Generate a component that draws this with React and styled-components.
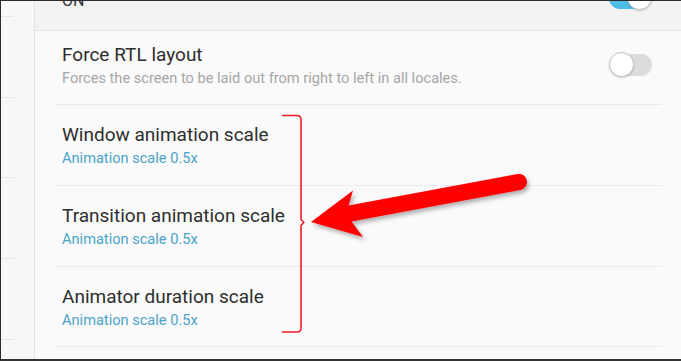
import React from "react";
import styled, { createGlobalStyle } from "styled-components";

const Global = createGlobalStyle`
  html, body { margin: 0; padding: 0; background: #fafafa; }
  body { font-family: Roboto, "Noto Sans", "Liberation Sans", sans-serif; }
`;

const Frame = styled.div`
  position: relative;
  width: 681px;
  height: 361px;
  box-sizing: border-box;
  border-top: 1px solid #2b2b2b;
  border-left: 1px solid #2b2b2b;
  border-bottom: 2px solid #333;
  display: flex;
  overflow: hidden;
  background: #fafafa;
`;

const Sidebar = styled.div`
  width: 33px;
  flex: none;
  border-right: 1px solid #e2e2e2;
  background: #f7f7f7;
  display: flex;
  flex-direction: column;
`;

const SideItem = styled.div`
  width: 13px;
  height: ${(p) => p.$h}px;
  flex: none;
  border-bottom: 1px solid #e6e6e6;
`;

const Main = styled.div`
  flex: 1;
  display: flex;
  flex-direction: column;
  min-width: 0;
`;

const TopRow = styled.div`
  height: 29px;
  flex: none;
  background: #f3f3f3;
  border-bottom: 1px solid #e4e4e4;
  display: flex;
  justify-content: space-between;
  align-items: flex-start;
  padding: 0 29px 0 27px;
  overflow: hidden;
`;

const OnText = styled.div`
  margin-top: -10px;
  font-size: 16px;
  line-height: 20px;
  color: #333;
`;

const Row = styled.div`
  height: ${(p) => p.$h}px;
  flex: none;
  box-sizing: border-box;
  padding: ${(p) => p.$pt}px 29px 0 27px;
  display: flex;
  justify-content: space-between;
  align-items: flex-start;
`;

const TextBlock = styled.div`
  display: flex;
  flex-direction: column;
`;

const Title = styled.div`
  font-size: 19px;
  line-height: 22px;
  color: #2e2e2e;
`;

const Sub = styled.div`
  margin-top: 2px;
  font-size: 14.6px;
  line-height: 20px;
  color: ${(p) => (p.$accent ? "#4aa3ca" : "#a6a6a6")};
`;

const Divider = styled.div`
  height: 1px;
  flex: none;
  margin: 0 19px 0 20px;
  background: #ebebeb;
`;

const Switch = styled.div`
  position: relative;
  width: 43px;
  height: 25px;
  flex: none;
  margin-top: ${(p) => p.$mt}px;
  display: flex;
  align-items: center;
`;

const Track = styled.div`
  width: 39px;
  height: 22px;
  border-radius: 11px;
  margin-left: ${(p) => (p.$on ? 0 : 4)}px;
  background: ${(p) => (p.$on ? "#4cbde6" : "#dcdcdc")};
`;

const Thumb = styled.div`
  position: absolute;
  top: 0;
  left: ${(p) => (p.$on ? 18 : 0)}px;
  width: 25px;
  height: 25px;
  box-sizing: border-box;
  border-radius: 50%;
  background: #fff;
  border: 1px solid #c4c4c4;
  box-shadow: 0 1px 2px rgba(0, 0, 0, 0.18);
`;

const Overlay = styled.svg`
  position: absolute;
  left: -1px;
  top: -1px;
  width: 681px;
  height: 361px;
  pointer-events: none;
`;

const Toggle = ({ on, mt }) => (
  <Switch $mt={mt}>
    <Track $on={on} />
    <Thumb $on={on} />
  </Switch>
);

const rows = [
  { title: "Window animation scale", h: 80 },
  { title: "Transition animation scale", h: 80 },
  { title: "Animator duration scale", h: 79 },
];

export default function App() {
  return (
    <>
      <Global />
      <Frame>
        <Sidebar>
          <SideItem $h={15} />
          <SideItem $h={80} />
          <SideItem $h={79} />
          <SideItem $h={80} />
          <SideItem $h={80} />
        </Sidebar>
        <Main>
          <TopRow>
            <OnText>ON</OnText>
            <Toggle on mt={-16} />
          </TopRow>
          <Row $h={73} $pt={13}>
            <TextBlock>
              <Title>Force RTL layout</Title>
              <Sub>Forces the screen to be laid out from right to left in all locales.</Sub>
            </TextBlock>
            <Toggle mt={8} />
          </Row>
          <Divider />
          {rows.map((r) => (
            <React.Fragment key={r.title}>
              <Row $h={r.h} $pt={19}>
                <TextBlock>
                  <Title>{r.title}</Title>
                  <Sub $accent>Animation scale 0.5x</Sub>
                </TextBlock>
              </Row>
              <Divider />
            </React.Fragment>
          ))}
        </Main>
        <Overlay viewBox="0 0 681 361">
          <defs>
            <filter id="sh" x="-20%" y="-40%" width="140%" height="180%">
              <feDropShadow dx="2" dy="3" stdDeviation="2" floodColor="#000" floodOpacity="0.3" />
            </filter>
          </defs>
          <path
            d="M282 115.5 H297 Q301 115.5 301 119.5 V219.5 L303.8 222.5 L301 225.5 V328 Q301 332 297 332 H282"
            fill="none"
            stroke="#ec1c24"
            strokeWidth="1.6"
          />
          <path
            d="M311 222 L353 190.5 L348.5 205.6 L517.5 174.1 A8 8 0 0 1 520.5 189.9 L351.5 221.4 L363 237 Z"
            fill="#ff0000"
            filter="url(#sh)"
          />
        </Overlay>
      </Frame>
    </>
  );
}
